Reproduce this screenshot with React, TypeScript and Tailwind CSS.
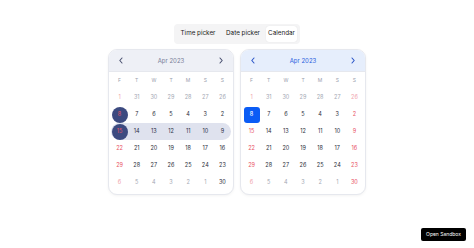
import React from "react";

type Cell = { n: number; tone: "fade" | "fadeRed" | "norm" | "red" | "sel" | "rangeStart" | "range" | "rangeEnd" };

const days = ["F", "T", "W", "T", "M", "S", "S"];

const leftRows: Cell[][] = [
  [{ n: 1, tone: "fadeRed" }, { n: 31, tone: "fade" }, { n: 30, tone: "fade" }, { n: 29, tone: "fade" }, { n: 28, tone: "fade" }, { n: 27, tone: "fade" }, { n: 26, tone: "fade" }],
  [{ n: 8, tone: "sel" }, { n: 7, tone: "norm" }, { n: 6, tone: "norm" }, { n: 5, tone: "norm" }, { n: 4, tone: "norm" }, { n: 3, tone: "norm" }, { n: 2, tone: "norm" }],
  [{ n: 15, tone: "rangeStart" }, { n: 14, tone: "range" }, { n: 13, tone: "range" }, { n: 12, tone: "range" }, { n: 11, tone: "range" }, { n: 10, tone: "range" }, { n: 9, tone: "rangeEnd" }],
  [{ n: 22, tone: "red" }, { n: 21, tone: "norm" }, { n: 20, tone: "norm" }, { n: 19, tone: "norm" }, { n: 18, tone: "norm" }, { n: 17, tone: "norm" }, { n: 16, tone: "norm" }],
  [{ n: 29, tone: "red" }, { n: 28, tone: "norm" }, { n: 27, tone: "norm" }, { n: 26, tone: "norm" }, { n: 25, tone: "norm" }, { n: 24, tone: "norm" }, { n: 23, tone: "norm" }],
  [{ n: 6, tone: "fadeRed" }, { n: 5, tone: "fade" }, { n: 4, tone: "fade" }, { n: 3, tone: "fade" }, { n: 2, tone: "fade" }, { n: 1, tone: "fade" }, { n: 30, tone: "norm" }],
];

const rightRows: Cell[][] = [
  [{ n: 1, tone: "fadeRed" }, { n: 31, tone: "fade" }, { n: 30, tone: "fade" }, { n: 29, tone: "fade" }, { n: 28, tone: "fade" }, { n: 27, tone: "fade" }, { n: 26, tone: "fadeRed" }],
  [{ n: 8, tone: "sel" }, { n: 7, tone: "norm" }, { n: 6, tone: "norm" }, { n: 5, tone: "norm" }, { n: 4, tone: "norm" }, { n: 3, tone: "norm" }, { n: 2, tone: "red" }],
  [{ n: 15, tone: "red" }, { n: 14, tone: "norm" }, { n: 13, tone: "norm" }, { n: 12, tone: "norm" }, { n: 11, tone: "norm" }, { n: 10, tone: "norm" }, { n: 9, tone: "red" }],
  [{ n: 22, tone: "red" }, { n: 21, tone: "norm" }, { n: 20, tone: "norm" }, { n: 19, tone: "norm" }, { n: 18, tone: "norm" }, { n: 17, tone: "norm" }, { n: 16, tone: "red" }],
  [{ n: 29, tone: "red" }, { n: 28, tone: "norm" }, { n: 27, tone: "norm" }, { n: 26, tone: "norm" }, { n: 25, tone: "norm" }, { n: 24, tone: "norm" }, { n: 23, tone: "red" }],
  [{ n: 6, tone: "fadeRed" }, { n: 5, tone: "fade" }, { n: 4, tone: "fade" }, { n: 3, tone: "fade" }, { n: 2, tone: "fade" }, { n: 1, tone: "fade" }, { n: 30, tone: "red" }],
];

const Chevron = ({ dir, color }: { dir: "l" | "r"; color: string }) => (
  <svg width="6" height="7" viewBox="0 0 6 7" fill="none">
    {dir === "l" ? (
      <path d="M4 1 L1.8 3.5 L4 6" stroke={color} strokeWidth="1.1" strokeLinecap="round" strokeLinejoin="round" />
    ) : (
      <path d="M2 1 L4.2 3.5 L2 6" stroke={color} strokeWidth="1.1" strokeLinecap="round" strokeLinejoin="round" />
    )}
  </svg>
);

function DayCell({ c, variant }: { c: Cell; variant: "left" | "right" }) {
  const base = "flex items-center justify-center h-[17px] text-[5.5px]";
  if (c.tone === "sel") {
    return (
      <div className={base}>
        {variant === "left" ? (
          <div className="w-[16px] h-[16px] rounded-full bg-[#3c4a80] flex items-center justify-center text-[#e0576a]">{c.n}</div>
        ) : (
          <div className="w-[16px] h-[16px] rounded-[3px] bg-[#0b5cf5] flex items-center justify-center text-white font-medium">{c.n}</div>
        )}
      </div>
    );
  }
  if (c.tone === "rangeStart") {
    return (
      <div className={base + " bg-[#dfe2ee] rounded-l-full"}>
        <div className="w-[16px] h-[16px] rounded-full bg-[#3c4a80] flex items-center justify-center text-[#e0576a]">{c.n}</div>
      </div>
    );
  }
  if (c.tone === "range" || c.tone === "rangeEnd") {
    return (
      <div className={base + " bg-[#dfe2ee] text-[#2a2f45] " + (c.tone === "rangeEnd" ? "rounded-r-full" : "")}>{c.n}</div>
    );
  }
  const color =
    c.tone === "fade" ? "text-[#a3a7b3]" : c.tone === "fadeRed" ? "text-[#f0a2ab]" : c.tone === "red" ? "text-[#e8505f]" : "text-[#2a2e3a]";
  return <div className={base + " " + color}>{c.n}</div>;
}

function CalendarCard({ rows, variant }: { rows: Cell[][]; variant: "left" | "right" }) {
  const headerBg = variant === "left" ? "bg-[#eef0f6]" : "bg-[#e6eefc]";
  const titleColor = variant === "left" ? "text-[#7a8099]" : "text-[#2a5fe0]";
  const arrowColor = variant === "left" ? "#4a5170" : "#2a55c8";
  return (
    <div className="w-[126px] h-[146px] rounded-[9px] border border-[#e6e8ee] bg-white overflow-hidden shadow-[0_1px_3px_rgba(0,0,0,0.05)]">
      <div className={"h-[22px] flex items-center justify-between px-[9px] border-b border-[#e6e8ee] " + headerBg}>
        <Chevron dir="l" color={arrowColor} />
        <span className={"text-[6px] " + titleColor}>Apr 2023</span>
        <Chevron dir="r" color={arrowColor} />
      </div>
      <div className="px-[2px] pb-[4px]">
        <div className="grid grid-cols-7">
          {days.map((d, i) => (
            <div key={i} className="h-[17px] flex items-center justify-center text-[5px] text-[#9aa0ad]">{d}</div>
          ))}
        </div>
        {rows.map((r, i) => (
          <div key={i} className="grid grid-cols-7">
            {r.map((c, j) => (
              <DayCell key={j} c={c} variant={variant} />
            ))}
          </div>
        ))}
      </div>
    </div>
  );
}

export default function App() {
  return (
    <div className="w-[474px] h-[248px] bg-white flex flex-col items-center relative" style={{ fontFamily: "Inter, 'Noto Sans', sans-serif" }}>
      <div className="mt-[24px] h-[20px] w-[126px] rounded-[4px] bg-[#f4f4f5] flex items-center pl-[2px] text-[6.3px] text-[#222]">
        <div className="w-[44px] h-[16px] flex items-center justify-center">Time picker</div>
        <div className="w-[46px] h-[16px] flex items-center justify-center">Date picker</div>
        <div className="w-[31px] h-[16px] flex items-center justify-center rounded-[3px] bg-white shadow-[0_0_1px_rgba(0,0,0,0.12)]">Calendar</div>
      </div>
      <div className="mt-[5px] flex gap-[6px]">
        <CalendarCard rows={leftRows} variant="left" />
        <CalendarCard rows={rightRows} variant="right" />
      </div>
      <div className="absolute right-[8px] bottom-[7px] h-[13px] w-[45px] rounded-[2px] bg-black text-white text-[5px] flex items-center justify-center">Open Sandbox</div>
    </div>
  );
}
